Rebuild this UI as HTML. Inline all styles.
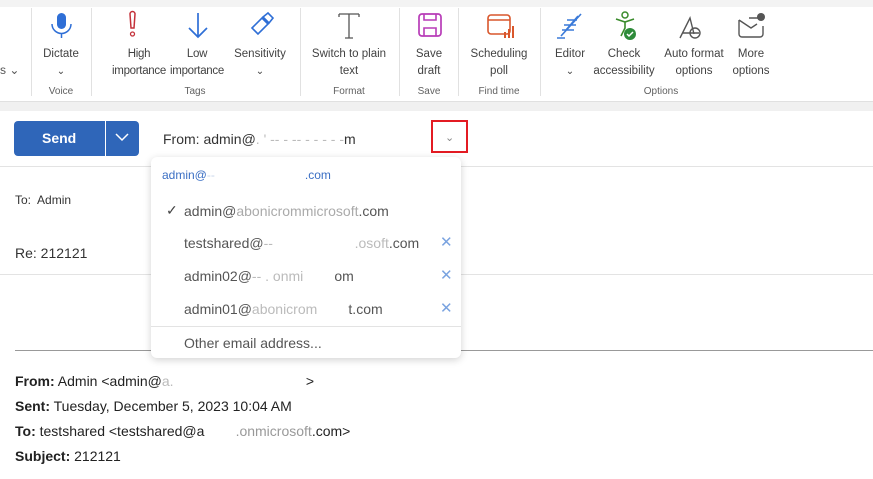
<!DOCTYPE html>
<html><head><meta charset="utf-8"><style>
*{margin:0;padding:0;box-sizing:border-box}
body{width:873px;height:479px;overflow:hidden;background:#fff;font-family:"Liberation Sans",sans-serif;position:relative;color:#323130}
.a{position:absolute;white-space:nowrap}
.lbl{position:absolute;font-size:11.5px;color:#424242;text-align:center;line-height:17px;transform:translateX(-50%);white-space:nowrap}
.grp{position:absolute;font-size:10px;color:#616161;transform:translateX(-50%);top:86px}
.sep{position:absolute;top:8px;width:1px;height:88px;background:#e1e1e1}
.hl{position:absolute;left:0;width:873px;height:1px;background:#e3e3e3}
.item{position:absolute;left:184px;font-size:14px;color:#555}
.x{position:absolute;left:440px;font-size:15px;color:#7aa3e0}
.b{font-size:14px;color:#222;position:absolute;left:15px}
</style></head><body>
<div class="a" style="left:0;top:0;width:873px;height:7px;background:#f3f3f3"></div>
<div class="a" style="left:0;top:101px;width:873px;height:10px;background:#f0f0f0;border-top:1px solid #e0e0e0"></div>
<div class="sep" style="left:31px"></div><div class="sep" style="left:91px"></div><div class="sep" style="left:300px"></div><div class="sep" style="left:399px"></div><div class="sep" style="left:458px"></div><div class="sep" style="left:540px"></div>
<div class="a" style="left:0;top:63px;font-size:12px;color:#555">s ⌄</div>
<svg class="a" style="left:0;top:8px" width="873" height="36">
<rect x="57" y="5" width="9" height="16" rx="4.5" fill="#2f6fd6"/><path d="M52 16a9.5 9.5 0 0 0 19 0M61.5 26v4" stroke="#2f6fd6" stroke-width="1.5" fill="none"/>
<path d="M130 6a2.5 2.5 0 0 1 5 0l-1 14h-3z" stroke="#c4313a" stroke-width="1.5" fill="none"/><circle cx="132.5" cy="26" r="2" stroke="#c4313a" stroke-width="1.3" fill="none"/>
<path d="M198 5v24M189 20l9 9 9-9" stroke="#2f6fd6" stroke-width="1.7" fill="none"/>
<path d="M252 20l10-10 6 6-10 10zM263 9l5-4 5 5-4 5zM254 22l4 4" stroke="#2f6fd6" stroke-width="1.6" fill="none"/>
<path d="M339 6h20M349 6v24M345 30h8M339 6v3M359 6v3" stroke="#555" stroke-width="1.3" fill="none"/>
<rect x="419" y="6" width="22" height="22" rx="3" stroke="#b83cb8" stroke-width="1.7" fill="none"/><path d="M424 6v6h12V6M424 28v-8h12v8" stroke="#b83cb8" stroke-width="1.6" fill="none"/>
<rect x="488" y="7" width="22" height="19" rx="3" stroke="#d9572c" stroke-width="1.6" fill="none"/><path d="M488 12h22" stroke="#d9572c" stroke-width="1.6"/><path d="M505 24v6M509 21v9M513 18v12" stroke="#d9572c" stroke-width="2"/>
<path d="M561 28l20-22M566 22l12-14M562 22h12M564 17h12M567 12h10M557 30h8" stroke="#3a7ad9" stroke-width="1.6" fill="none"/>
<circle cx="625" cy="7" r="3" stroke="#3a8b2c" stroke-width="1.5" fill="none"/><path d="M616 11l9 3 9-3M625 14v6l-4 8" stroke="#3a8b2c" stroke-width="1.6" fill="none"/><circle cx="630" cy="26" r="6" fill="#2e8b3a"/><path d="M627 26l2 2 4-4" stroke="#fff" stroke-width="1.5" fill="none"/>
<path d="M680 30l10-20 4 16M683 25h16" stroke="#555" stroke-width="1.4" fill="none"/><circle cx="695" cy="25" r="5" stroke="#555" stroke-width="1.4" fill="none"/>
<path d="M749 10h10M739 12v14a3 3 0 0 0 3 3h18a3 3 0 0 0 3-3v-8M739 12l12 8 6-4" stroke="#555" stroke-width="1.4" fill="none"/><circle cx="761" cy="9" r="4" fill="#555"/>
</svg>
<div class="lbl" style="left:61px;top:46px">Dictate<br><span style="font-size:10px">⌄</span></div><div class="grp" style="left:61px">Voice</div>
<div class="lbl" style="left:139px;top:46px;letter-spacing:-0.3px">High<br>importance</div>
<div class="lbl" style="left:197px;top:46px;letter-spacing:-0.3px">Low<br>importance</div>
<div class="lbl" style="left:260px;top:46px">Sensitivity<br><span style="font-size:10px">⌄</span></div><div class="grp" style="left:195px">Tags</div>
<div class="lbl" style="left:349px;top:46px">Switch to plain<br>text</div><div class="grp" style="left:349px">Format</div>
<div class="lbl" style="left:429px;top:46px">Save<br>draft</div><div class="grp" style="left:429px">Save</div>
<div class="lbl" style="left:499px;top:46px">Scheduling<br>poll</div><div class="grp" style="left:499px">Find time</div>
<div class="lbl" style="left:570px;top:46px">Editor<br><span style="font-size:10px">⌄</span></div>
<div class="lbl" style="left:624px;top:46px">Check<br>accessibility</div>
<div class="lbl" style="left:694px;top:46px">Auto format<br>options</div>
<div class="lbl" style="left:751px;top:46px">More<br>options</div><div class="grp" style="left:661px">Options</div>
<div class="a" style="left:14px;top:121px;width:125px;height:35px;background:#2f66b9;border-radius:4px"></div>
<div class="a" style="left:105px;top:121px;width:1px;height:35px;background:#fff"></div>
<div class="a" style="left:42px;top:130px;color:#fff;font-weight:bold;font-size:14px">Send</div>
<svg class="a" style="left:114px;top:131px" width="16" height="12"><path d="M2 3l6 6 6-6" stroke="#fff" stroke-width="1.5" fill="none"/></svg>
<div class="a" style="left:163px;top:131px;font-size:14px;color:#333">From: admin@<span style="color:#bbb">. ' -- - -- - - - - -</span>m</div>
<div class="a" style="left:431px;top:120px;width:37px;height:33px;border:2.5px solid #e31b23"></div>
<div class="a" style="left:445px;top:131px;font-size:11px;color:#888">⌄</div>
<div class="hl" style="top:166px"></div>
<div class="hl" style="top:274px"></div>
<div class="a" style="left:15px;top:350px;width:858px;height:1px;background:#999"></div>
<div class="a" style="left:15px;top:193px;font-size:12px;color:#333">To:&nbsp; Admin</div>
<div class="a" style="left:15px;top:245px;font-size:14px;color:#333">Re: 212121</div>
<div class="a" style="left:151px;top:157px;width:310px;height:201px;background:#fff;border-radius:6px;box-shadow:0 2px 8px rgba(0,0,0,.18)"></div>
<div class="a" style="left:162px;top:168px;font-size:12px;color:#3b6fc4">admin@<span style="color:#c7d4ea">--</span>&nbsp;&nbsp;&nbsp;&nbsp;&nbsp;&nbsp;&nbsp;&nbsp;&nbsp;&nbsp;&nbsp;&nbsp;&nbsp;&nbsp;&nbsp;&nbsp;&nbsp;&nbsp;&nbsp;&nbsp;&nbsp;&nbsp;&nbsp;&nbsp;&nbsp;&nbsp;&nbsp;.com</div>
<div class="a" style="left:166px;top:202px;font-size:14px;color:#444">✓</div>
<div class="item" style="top:203px">admin@<span style="color:#aaa">abonicrommicrosoft</span>.com</div>
<div class="item" style="top:235px">testshared@<span style="color:#bbb">--</span>&nbsp;&nbsp;&nbsp;&nbsp;&nbsp;&nbsp;&nbsp;&nbsp;&nbsp;&nbsp;&nbsp;&nbsp;&nbsp;&nbsp;&nbsp;&nbsp;&nbsp;&nbsp;&nbsp;&nbsp;&nbsp;<span style="color:#bbb">.osoft</span>.com</div>
<div class="item" style="top:268px">admin02@<span style="color:#bbb">-- . onmi</span>&nbsp;&nbsp;&nbsp;&nbsp;&nbsp;&nbsp;&nbsp;&nbsp;om</div>
<div class="item" style="top:301px">admin01@<span style="color:#bbb">abonicrom</span>&nbsp;&nbsp;&nbsp;&nbsp;&nbsp;&nbsp;&nbsp;&nbsp;t.com</div>
<div class="x" style="top:233px">✕</div><div class="x" style="top:266px">✕</div><div class="x" style="top:299px">✕</div>
<div class="a" style="left:151px;top:326px;width:310px;height:1px;background:#e3e3e3"></div>
<div class="item" style="top:335px">Other email address...</div>
<div class="b" style="top:373px"><b>From:</b> Admin &lt;admin@<span style="color:#bbb">a.</span>&nbsp;&nbsp;&nbsp;&nbsp;&nbsp;&nbsp;&nbsp;&nbsp;&nbsp;&nbsp;&nbsp;&nbsp;&nbsp;&nbsp;&nbsp;&nbsp;&nbsp;&nbsp;&nbsp;&nbsp;&nbsp;&nbsp;&nbsp;&nbsp;&nbsp;&nbsp;&nbsp;&nbsp;&nbsp;&nbsp;&nbsp;&nbsp;&nbsp;&nbsp;&gt;</div>
<div class="b" style="top:398px"><b>Sent:</b> Tuesday, December 5, 2023 10:04 AM</div>
<div class="b" style="top:423px"><b>To:</b> testshared &lt;testshared@a&nbsp;&nbsp;&nbsp;&nbsp;&nbsp;&nbsp;&nbsp;&nbsp;<span style="color:#999">.onmicrosoft</span>.com&gt;</div>
<div class="b" style="top:448px"><b>Subject:</b> 212121</div>
</body></html>
